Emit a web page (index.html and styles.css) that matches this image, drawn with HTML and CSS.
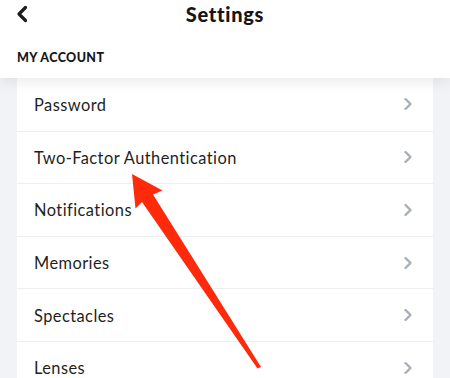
FILE: index.html
```html
<!DOCTYPE html>
<html>
<head>
<meta charset="utf-8">
<link rel="stylesheet" href="styles.css">
</head>
<body>
<div class="screen">
  <header class="header">
    <div class="topbar">
      <svg class="back" width="14" height="18" viewBox="0 0 14 18"><path d="M10.5 2.5 L4 9 L10.5 15.5" fill="none" stroke="#1c1c1e" stroke-width="3.2" stroke-linecap="round" stroke-linejoin="round"/></svg>
      <h1 class="title">Settings</h1>
    </div>
    <div class="section">MY ACCOUNT</div>
  </header>
  <main class="content">
    <ul class="card">
      <li class="row"><span>Password</span><svg class="chev" width="10" height="14" viewBox="0 0 10 14"><path d="M2.5 2 L7.5 7 L2.5 12" fill="none" stroke="#a8afb7" stroke-width="2.4" stroke-linecap="round" stroke-linejoin="round"/></svg></li>
      <li class="row"><span>Two-Factor Authentication</span><svg class="chev" width="10" height="14" viewBox="0 0 10 14"><path d="M2.5 2 L7.5 7 L2.5 12" fill="none" stroke="#a8afb7" stroke-width="2.4" stroke-linecap="round" stroke-linejoin="round"/></svg></li>
      <li class="row"><span>Notifications</span><svg class="chev" width="10" height="14" viewBox="0 0 10 14"><path d="M2.5 2 L7.5 7 L2.5 12" fill="none" stroke="#a8afb7" stroke-width="2.4" stroke-linecap="round" stroke-linejoin="round"/></svg></li>
      <li class="row"><span>Memories</span><svg class="chev" width="10" height="14" viewBox="0 0 10 14"><path d="M2.5 2 L7.5 7 L2.5 12" fill="none" stroke="#a8afb7" stroke-width="2.4" stroke-linecap="round" stroke-linejoin="round"/></svg></li>
      <li class="row"><span>Spectacles</span><svg class="chev" width="10" height="14" viewBox="0 0 10 14"><path d="M2.5 2 L7.5 7 L2.5 12" fill="none" stroke="#a8afb7" stroke-width="2.4" stroke-linecap="round" stroke-linejoin="round"/></svg></li>
      <li class="row"><span>Lenses</span><svg class="chev" width="10" height="14" viewBox="0 0 10 14"><path d="M2.5 2 L7.5 7 L2.5 12" fill="none" stroke="#a8afb7" stroke-width="2.4" stroke-linecap="round" stroke-linejoin="round"/></svg></li>
    </ul>
  </main>
  <svg class="arrow" width="450" height="378" viewBox="0 0 450 378"><polygon points="132,174 162.5,190.5 153,194.5 261,367 257.5,368.5 142,202 135.5,208.5" fill="#fe2a0c"/></svg>
</div>
</body>
</html>
```
FILE: styles.css
```css
* { box-sizing: border-box; }
html, body { margin: 0; padding: 0; }
body {
  width: 450px;
  height: 378px;
  overflow: hidden;
  font-family: Lato, "Open Sans", sans-serif;
  color: #1c1c1e;
  background: #f1f3f6;
}
.screen {
  position: relative;
  width: 450px;
  height: 378px;
  overflow: hidden;
  display: flex;
  flex-direction: column;
}
.header {
  position: relative;
  z-index: 2;
  flex-shrink: 0;
  background: #fff;
  height: 78px;
  box-shadow: 0 3px 14px rgba(0, 0, 0, 0.09);
  display: flex;
  flex-direction: column;
}
.topbar {
  position: relative;
  height: 27px;
  display: flex;
  align-items: center;
  justify-content: center;
}
.back {
  position: absolute;
  left: 15px;
  top: 5px;
}
.title {
  margin: 0;
  font-size: 20px;
  font-weight: 900;
  letter-spacing: 0.7px;
  color: #161618;
}
.section {
  margin-top: 23px;
  padding-left: 17px;
  font-size: 12.5px;
  font-weight: 900;
  letter-spacing: 0.4px;
  color: #161618;
}
.content {
  flex-shrink: 0;
  padding: 0 17px;
}
.card {
  list-style: none;
  margin: 0;
  padding: 0;
  background: #fff;
}
.row {
  height: 52.6px;
  display: flex;
  align-items: center;
  justify-content: space-between;
  padding: 0 20px 0 17px;
  font-size: 16.4px;
  color: #1f1f22;
  letter-spacing: 0.45px;
}
.row + .row { border-top: 1px solid #eceef1; }
.chev { display: block; }
.arrow {
  position: absolute;
  left: 0;
  top: 0;
  z-index: 3;
  pointer-events: none;
}
```
